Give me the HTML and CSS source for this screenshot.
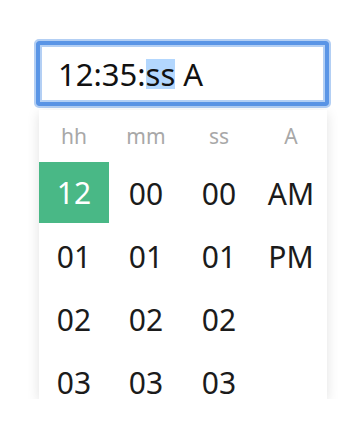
FILE: index.html
```html
<!DOCTYPE html>
<html>
<head>
<meta charset="utf-8">
<link rel="stylesheet" href="styles.css">
</head>
<body>
<div class="picker">
  <div class="input"><span>12:35:</span><span class="sel">ss</span><span>&nbsp;A</span></div>
  <div class="panel">
    <div class="col">
      <div class="head">hh</div>
      <div class="cell active">12</div>
      <div class="cell">01</div>
      <div class="cell">02</div>
      <div class="cell last">03</div>
    </div>
    <div class="col">
      <div class="head">mm</div>
      <div class="cell">00</div>
      <div class="cell">01</div>
      <div class="cell">02</div>
      <div class="cell last">03</div>
    </div>
    <div class="col">
      <div class="head">ss</div>
      <div class="cell">00</div>
      <div class="cell">01</div>
      <div class="cell">02</div>
      <div class="cell last">03</div>
    </div>
    <div class="col">
      <div class="head">A</div>
      <div class="cell">AM</div>
      <div class="cell">PM</div>
    </div>
  </div>
</div>
</body>
</html>
```
FILE: styles.css
```css
html, body {
  margin: 0;
  padding: 0;
  background: #ffffff;
}
body {
  font-family: "Noto Sans", "Liberation Sans", sans-serif;
  color: #1b1b1b;
}
.picker {
  padding: 39px 0 0 34px;
}
.input {
  box-sizing: border-box;
  width: 297px;
  height: 69px;
  border: 2px solid #b3cff4;
  border-radius: 5px;
  box-shadow: inset 0 0 0 4px #5a95e6, inset 0 0 0 6px #b3cff4;
  display: flex;
  align-items: center;
  padding-left: 22px;
  font-size: 31px;
  line-height: 30px;
  color: #111;
}
.sel {
  background: #b3d7fe;
}
.panel {
  margin: 2px 0 0 5px;
  width: 288px;
  height: 289px;
  background: #fff;
  display: grid;
  grid-template-columns: 70px 74px 72px 72px;
  align-items: start;
  box-shadow: 0 3px 12px rgba(0, 0, 0, 0.12);
}
.col {
  display: flex;
  flex-direction: column;
}
.head {
  height: 52px;
  display: flex;
  align-items: center;
  justify-content: center;
  font-size: 21px;
  color: #a8a8a8;
}
.cell {
  box-sizing: border-box;
  height: 63px;
  display: flex;
  align-items: center;
  justify-content: center;
  font-size: 30px;
  line-height: 1;
}
.cell.last {
  height: 48px;
  padding-top: 15px;
}
.cell.active {
  background: #49b886;
  color: #fff;
  height: 61px;
  margin-bottom: 2px;
}
```
